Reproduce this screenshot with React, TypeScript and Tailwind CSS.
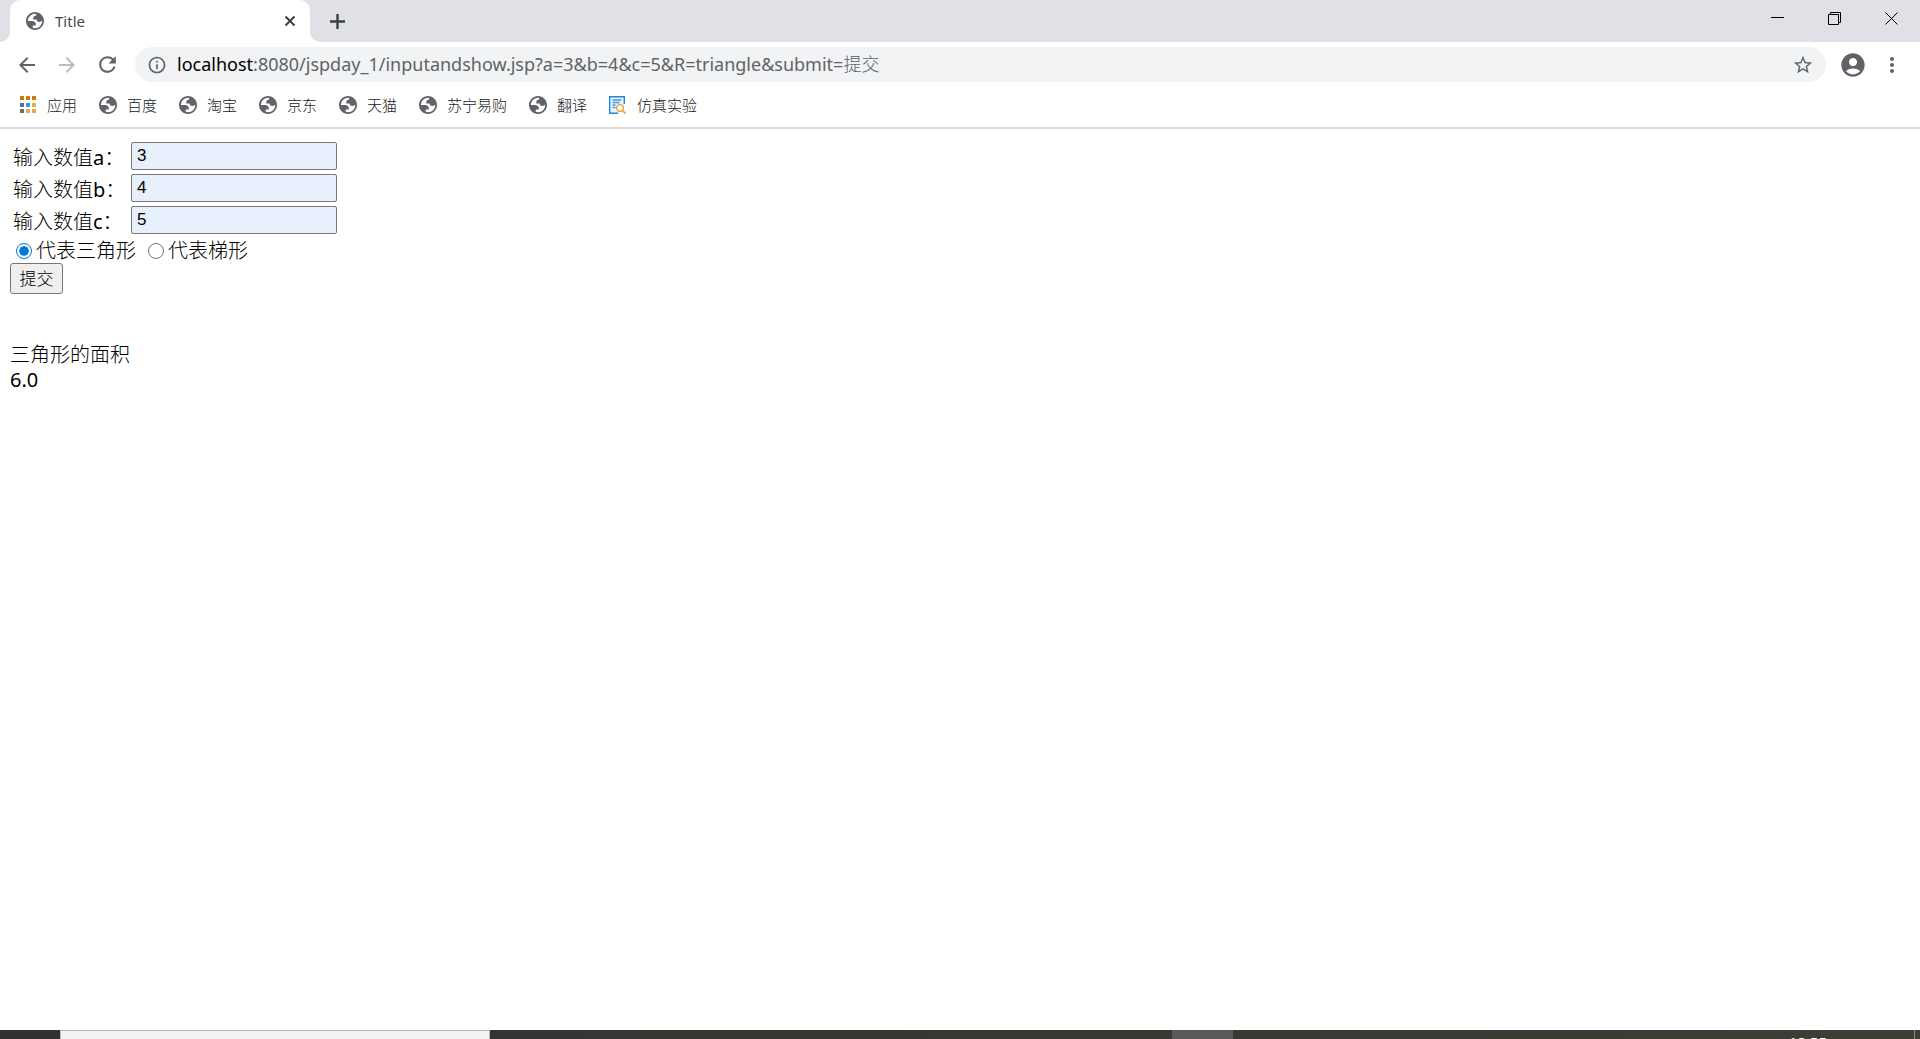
import { useState } from "react";
import {
  MdAccountCircle,
  MdArrowBack,
  MdArrowForward,
  MdInfoOutline,
  MdMoreVert,
  MdRefresh,
  MdStarBorder,
} from "react-icons/md";

const bookmarks = ["百度", "淘宝", "京东", "天猫", "苏宁易购", "翻译"];

const fields = ["a", "b", "c"] as const;

function GlobeIcon() {
  return (
    <svg viewBox="2 2 20 20" className="size-[18px] shrink-0 fill-[#5f6368]" aria-hidden="true">
      <path
        fillRule="evenodd"
        d="M12 2c5.523 0 10 4.477 10 10s-4.477 10-10 10S2 17.523 2 12 6.477 2 12 2zM4 12h4.4c3.407.022 4.922 1.73 4.543 5.127H9.488v2.47a8.004 8.004 0 0 0 10.498-8.083C19.327 12.504 18.332 13 17 13c-2.137 0-3.206-.916-3.206-2.75h-3.748c-.274-2.728.683-4.092 2.87-4.092 0-.975.327-1.597.811-1.97A8.004 8.004 0 0 0 4 12z"
      />
    </svg>
  );
}

function AppsIcon() {
  return (
    <svg viewBox="0 0 18 18" className="size-[18px] shrink-0" aria-hidden="true">
      <path fill="#d07a0c" d="M1 0h4v4H1zM7 0h4v4H7zM13 0h4v4h-4z" />
      <path fill="#5b7480" d="M1 7h4v4H1zM1 13h4v4H1z" />
      <path fill="#2f97ee" d="M7 7h4v4H7z" />
      <path fill="#eaa84c" d="M13 7h4v4h-4zM7 13h4v4H7zM13 13h4v4h-4z" />
    </svg>
  );
}

function LabIcon() {
  return (
    <svg viewBox="0 0 18 18" className="size-[18px] shrink-0" fill="none" aria-hidden="true">
      <path d="M9 17.3H.7V.7h14.6V8" fill="#eaf5fd" stroke="#1e88dc" strokeWidth="1.4" />
      <path d="M3.5 4h9M3.5 6.5h7M3.5 9h3M3.5 11.5h3" stroke="#3c9be6" strokeWidth="1.4" />
      <circle cx="11" cy="12" r="3.4" fill="#fff" stroke="#eda23a" strokeWidth="1.5" />
      <path d="m13.5 14.5 3 3" stroke="#eda23a" strokeWidth="1.7" />
    </svg>
  );
}

function TabStrip() {
  return (
    <header className="flex h-[42px] justify-between bg-[#dfe1e6]">
      <div className="flex">
        <div className="flex w-[10px] bg-white">
          <div className="flex-1 rounded-br-[10px] bg-[#dfe1e6]" />
        </div>
        <div className="w-[300px] bg-[#dfe1e6]">
          <div className="flex h-full items-center rounded-t-[10px] bg-white pr-[11px] pl-4">
            <GlobeIcon />
            <span className="ml-[11px] flex-1 text-[15px] text-[#45494d]">Title</span>
            <button type="button" aria-label="Close tab" className="text-[#3c4043]">
              <svg viewBox="0 0 18 18" className="size-[18px]" stroke="currentColor" strokeWidth="2">
                <path d="m4.500 4.500 9 9M13.500 4.500l-9 9" />
              </svg>
            </button>
          </div>
        </div>
        <div className="flex w-[10px] bg-white">
          <div className="flex-1 rounded-bl-[10px] bg-[#dfe1e6]" />
        </div>
        <button type="button" aria-label="New tab" className="ml-1 px-px text-[#3c4043]">
          <svg viewBox="0 0 25 25" className="size-[25px]" stroke="currentColor" strokeWidth="2.400">
            <path d="M12.500 5v15M5 12.500h15" />
          </svg>
        </button>
      </div>

      <div className="flex h-[37px] text-black">
        <button type="button" aria-label="Minimize" className="grid w-[57px] place-items-center">
          <svg viewBox="0 0 13 13" className="size-[13px]" stroke="currentColor">
            <path d="M0 5.500h13" />
          </svg>
        </button>
        <button type="button" aria-label="Restore" className="grid w-[57px] place-items-center">
          <svg viewBox="0 0 13 13" className="size-[13px]" fill="none" stroke="currentColor">
            <path d="M.5 2.5h10v10H.5zM2.5 2.5v-2h10v10h-2" />
          </svg>
        </button>
        <button type="button" aria-label="Close" className="grid w-[57px] place-items-center">
          <svg viewBox="0 0 13 13" className="size-[13px]" stroke="currentColor">
            <path d="m.5.5 12 12M12.5.5l-12 12" />
          </svg>
        </button>
      </div>
    </header>
  );
}

function Toolbar() {
  return (
    <div className="flex h-[45px] items-center pl-[7px] text-[#5f6368]">
      <button type="button" aria-label="Back" className="grid w-10 place-items-center">
        <MdArrowBack className="size-6" />
      </button>
      <button type="button" aria-label="Forward" className="grid w-10 place-items-center text-[#babcbe]">
        <MdArrowForward className="size-6" />
      </button>
      <button type="button" aria-label="Reload" className="grid w-10 place-items-center">
        <MdRefresh className="size-[25px]" />
      </button>
      <div className="ml-2 flex h-[35px] flex-1 items-center rounded-full bg-[#f1f3f4] px-3">
        <MdInfoOutline className="size-5 shrink-0" />
        <p className="ml-[10px] flex-1 pb-0.5 text-lg whitespace-nowrap">
          <span className="text-black">localhost</span>
          :8080/jspday_1/inputandshow.jsp?a=3&amp;b=4&amp;c=5&amp;R=triangle&amp;submit=
          <span className="font-light">提交</span>
        </p>
        <button type="button" aria-label="Bookmark this page">
          <MdStarBorder className="size-[22px]" />
        </button>
      </div>
      <button type="button" aria-label="Profile" className="ml-[13px]">
        <MdAccountCircle className="size-7" />
      </button>
      <button type="button" aria-label="Menu" className="mr-4 ml-[13px]">
        <MdMoreVert className="size-6" />
      </button>
    </div>
  );
}

function BookmarksBar() {
  return (
    <nav className="flex h-[42px] items-center gap-[22px] border-b-2 border-[#dadce0] pb-1 pl-[19px] text-[15px] font-light text-[#202124]">
      <a href="#apps" className="flex items-center gap-[10px]">
        <AppsIcon />
        应用
      </a>
      {bookmarks.map((label) => (
        <a key={label} href={`#${label}`} className="flex items-center gap-[10px]">
          <GlobeIcon />
          {label}
        </a>
      ))}
      <a href="#lab" className="flex items-center gap-[10px]">
        <LabIcon />
        仿真实验
      </a>
    </nav>
  );
}

function ShapeForm() {
  const [values, setValues] = useState({ a: "3", b: "4", c: "5" });
  const [shape, setShape] = useState("triangle");

  return (
    <form onSubmit={(e) => e.preventDefault()} className="font-light">
      <div className="space-y-1 pl-[3px]">
        {fields.map((name) => (
          <div key={name} className="flex h-7 items-center">
            <label htmlFor={name} className="w-[118px] pt-0.5">
              输入数值<span className="font-normal">{name}</span>：
            </label>
            <input
              id={name}
              name={name}
              value={values[name]}
              onChange={(e) => setValues({ ...values, [name]: e.target.value })}
              className="h-7 w-[206px] rounded-[2px] border border-[#767676] bg-[#e8f0fe] px-[5px] pb-px font-['Liberation_Sans',sans-serif] text-[17px]"
            />
          </div>
        ))}
      </div>
      <div className="flex h-[29px] items-center gap-3 pt-1 pl-[6px]">
        <label className="flex items-center gap-1">
          <input
            type="radio"
            name="R"
            value="triangle"
            checked={shape === "triangle"}
            onChange={(e) => setShape(e.target.value)}
            className="size-4 accent-[#0078d7]"
          />
          代表三角形
        </label>
        <label className="flex items-center gap-1">
          <input
            type="radio"
            name="R"
            value="trapezoid"
            checked={shape === "trapezoid"}
            onChange={(e) => setShape(e.target.value)}
            className="size-4 accent-[#0078d7]"
          />
          代表梯形
        </label>
      </div>
      <button
        type="submit"
        className="block h-[31px] w-[53px] rounded-[3px] border border-[#767676] bg-[#efefef] text-[17px] leading-none"
      >
        提交
      </button>
    </form>
  );
}

function Taskbar() {
  return (
    <footer className="flex h-[9px] overflow-hidden bg-linear-to-r from-[#2f322f] to-[#3c3e37]">
      <input
        aria-label="Search"
        className="ml-[60px] w-[430px] border border-b-0 border-[#b9bab9] bg-[#f2f2f2]"
      />
      <button type="button" aria-label="Browser window" className="ml-[682px] w-[61px] bg-[#58595b]" />
      <time className="mr-[87px] ml-auto pt-0.5 text-[15px] leading-5 text-white">18:55</time>
      <div className="mr-[5px] w-px bg-[#8b8c88]" />
    </footer>
  );
}

export default function App() {
  return (
    <div className="flex min-h-screen flex-col bg-white font-['Noto_Sans','Noto_Sans_CJK_SC',sans-serif]">
      <TabStrip />
      <Toolbar />
      <BookmarksBar />
      <main className="flex-1 px-[10px] pt-[13px] text-xl leading-[25px] text-black">
        <ShapeForm />
        <section className="mt-12">
          <p className="font-light">三角形的面积</p>
          <p>6.0</p>
        </section>
      </main>
      <Taskbar />
    </div>
  );
}
